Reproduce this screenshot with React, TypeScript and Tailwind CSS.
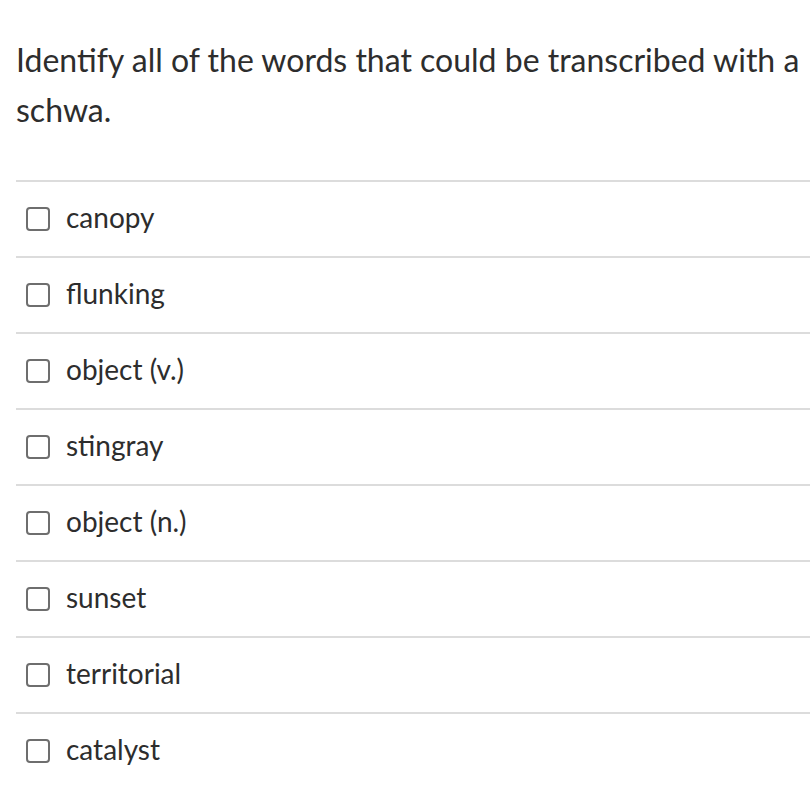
const options = [
  "canopy",
  "flunking",
  "object (v.)",
  "stingray",
  "object (n.)",
  "sunset",
  "territorial",
  "catalyst",
];

export default function App() {
  return (
    <div className="min-h-[792px] bg-white pl-4 pt-[35px] text-[#2d2d2d] font-['Lato','Liberation_Sans',sans-serif]">
      <p className="text-[32px] leading-[50px]">
        Identify all of the words that could be transcribed with a schwa.
      </p>
      <div className="mt-[45px]">
        {options.map((opt) => (
          <label
            key={opt}
            className="flex h-[76px] items-center border-t-2 border-[#dcdcdc] pl-[10px]"
          >
            <span className="h-6 w-6 shrink-0 rounded-[4px] border-2 border-[#6e6e6e] bg-white"></span>
            <span className="ml-[16px] mb-[4px] text-[28px]">{opt}</span>
          </label>
        ))}
      </div>
    </div>
  );
}
